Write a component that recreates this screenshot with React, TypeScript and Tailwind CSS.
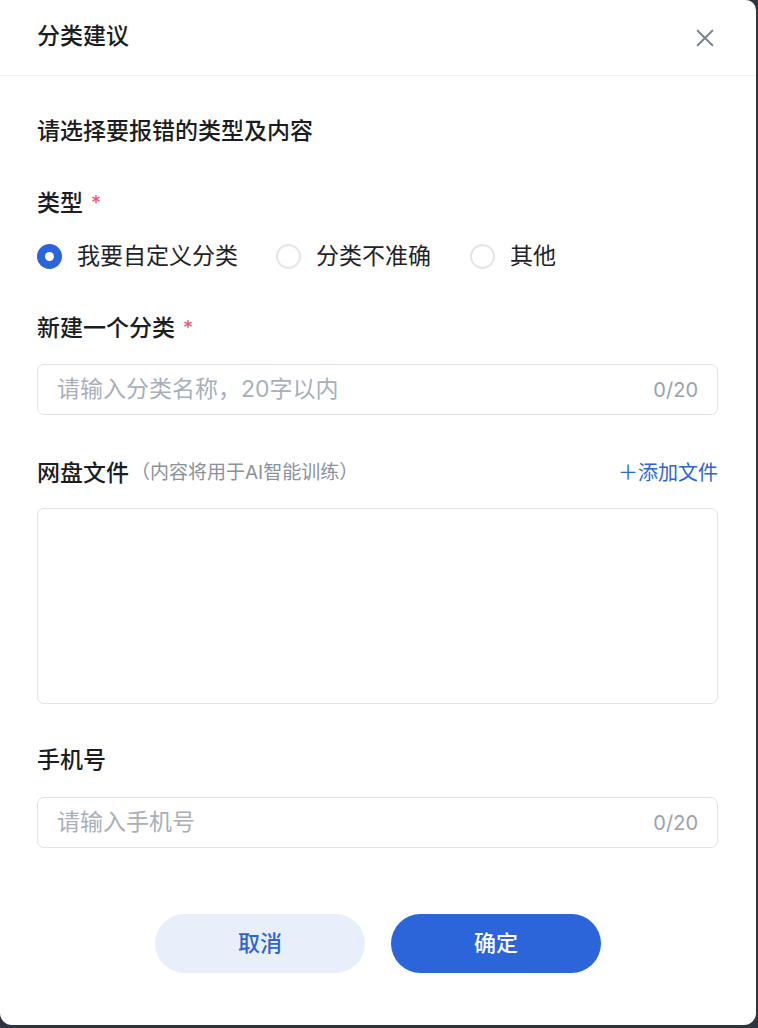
import React, { useState } from "react";

const FONT = { fontFamily: 'Inter, "Noto Sans CJK SC", "Noto Sans", sans-serif' };

function Radio({ checked, label, onClick }: { checked: boolean; label: string; onClick: () => void }) {
  return (
    <button type="button" onClick={onClick} className="flex items-center gap-[15px]">
      {checked ? (
        <span className="flex h-[25px] w-[25px] items-center justify-center rounded-full bg-[#2b65d9]">
          <span className="h-[9px] w-[9px] rounded-full bg-white" />
        </span>
      ) : (
        <span className="h-[25px] w-[25px] rounded-full border-2 border-[#e3e5ea] bg-white" />
      )}
      <span className="text-[23px] leading-[30px] text-[#1f2329]">{label}</span>
    </button>
  );
}

function Label({ text, required }: { text: string; required?: boolean }) {
  return (
    <div className="flex items-center text-[23px] font-medium leading-[30px] text-[#1a1d23]">
      {text}
      {required && <span className="ml-[8px] text-[20px] font-normal text-[#f2506d]">*</span>}
    </div>
  );
}

function CountInput({ placeholder }: { placeholder: string }) {
  return (
    <div className="flex h-[51px] items-center rounded-[7px] border border-[#dfe2e7] pl-[19px] pr-[19px]">
      <input
        placeholder={placeholder}
        className="min-w-0 flex-1 bg-transparent text-[23px] text-[#1f2329] outline-none placeholder:text-[#a8afbb]"
        style={FONT}
      />
      <span className="text-[20px] text-[#9aa1ad]">0/20</span>
    </div>
  );
}

export default function App() {
  const [type, setType] = useState(0);
  const types = ["我要自定义分类", "分类不准确", "其他"];

  return (
    <div className="h-[1028px] w-[758px] bg-[#2f3441]" style={FONT}>
      <div className="flex h-[1025px] w-[756px] flex-col rounded-b-[12px] rounded-tr-[10px] bg-white">
        <div className="flex h-[76px] shrink-0 items-center justify-between border-b border-[#f0f1f4] pl-[37px] pr-[40px]">
          <div className="-mt-[3px] text-[23px] font-medium text-[#1a1d23]">分类建议</div>
          <svg width="22" height="22" viewBox="0 0 24 24" fill="none" stroke="#7b8494" strokeWidth="2.2" strokeLinecap="round">
            <path d="M4 4l16 16M20 4L4 20" />
          </svg>
        </div>

        <div className="flex flex-col pl-[37px] pr-[38px]">
          <div className="mt-[40px]">
            <Label text="请选择要报错的类型及内容" />
          </div>

          <div className="mt-[42px]">
            <Label text="类型" required />
          </div>
          <div className="mt-[23px] flex items-center">
            {types.map((t, i) => (
              <div key={t} className={i === 0 ? "w-[239px]" : i === 1 ? "w-[194px]" : ""}>
                <Radio checked={type === i} label={t} onClick={() => setType(i)} />
              </div>
            ))}
          </div>

          <div className="mt-[42px]">
            <Label text="新建一个分类" required />
          </div>
          <div className="mt-[21px]">
            <CountInput placeholder="请输入分类名称，20字以内" />
          </div>

          <div className="mt-[43px] flex items-center justify-between">
            <div className="flex items-center">
              <span className="text-[23px] font-medium leading-[30px] text-[#1a1d23]">网盘文件</span>
              <span className="ml-[2px] text-[19px] text-[#8b919c]">（内容将用于AI智能训练）</span>
            </div>
            <button type="button" className="text-[20px] text-[#2b65d9]">＋添加文件</button>
          </div>
          <div className="mt-[20px] h-[196px] rounded-[7px] border border-[#dfe2e7]" />

          <div className="mt-[41px]">
            <Label text="手机号" />
          </div>
          <div className="mt-[22px]">
            <CountInput placeholder="请输入手机号" />
          </div>
        </div>

        <div className="mt-[66px] flex justify-center gap-[26px]">
          <button type="button" className="h-[59px] w-[210px] rounded-full bg-[#e8effa] text-[22px] font-medium text-[#2b65d9]">
            取消
          </button>
          <button type="button" className="h-[59px] w-[210px] rounded-full bg-[#2b65d9] text-[22px] font-medium text-white">
            确定
          </button>
        </div>
      </div>
    </div>
  );
}
